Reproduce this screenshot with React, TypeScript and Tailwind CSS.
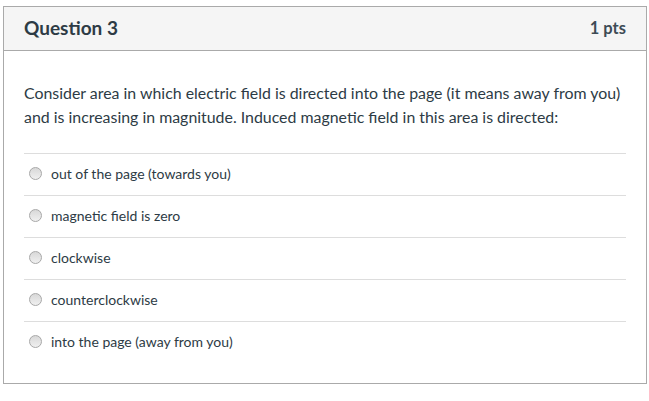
const answers = [
  "out of the page (towards you)",
  "magnetic field is zero",
  "clockwise",
  "counterclockwise",
  "into the page (away from you)",
];

function Radio() {
  return (
    <span className="box-border inline-block h-[13px] w-[13px] shrink-0 rounded-full border border-[#a8a8a8] bg-gradient-to-b from-[#d8d8d8] to-[#f0f0f0]" />
  );
}

export default function App() {
  return (
    <div
      className="min-h-[401px] bg-white pl-[3px] pt-[6px] text-[#2d3b45]"
      style={{ fontFamily: "Lato, 'Open Sans', sans-serif" }}
    >
      <div className="w-[644px] border border-[#aaaaaa]">
        <div className="flex h-[44px] items-center justify-between border-b border-[#aaaaaa] bg-[#f5f5f5] px-[20px]">
          <h2 className="text-[19px] font-bold text-[#2d3b45]">Question 3</h2>
          <span className="text-[16.5px] font-bold text-[#3d4b55]">1 pts</span>
        </div>
        <div className="px-[20px] pb-[20px] pt-[30px]">
          <p className="-mr-[6px] text-[15.9px] leading-[24px]">
            Consider area in which electric field is directed into the page (it
            means away from you) and is increasing in magnitude. Induced
            magnetic field in this area is directed:
          </p>
          <div className="mt-[24px]">
            {answers.map((a) => (
              <div
                key={a}
                className="flex h-[42px] items-center gap-[9px] border-t border-[#dddddd] pb-[3px] pl-[5px] text-[14px]"
              >
                <Radio />
                <span>{a}</span>
              </div>
            ))}
          </div>
        </div>
      </div>
    </div>
  );
}
